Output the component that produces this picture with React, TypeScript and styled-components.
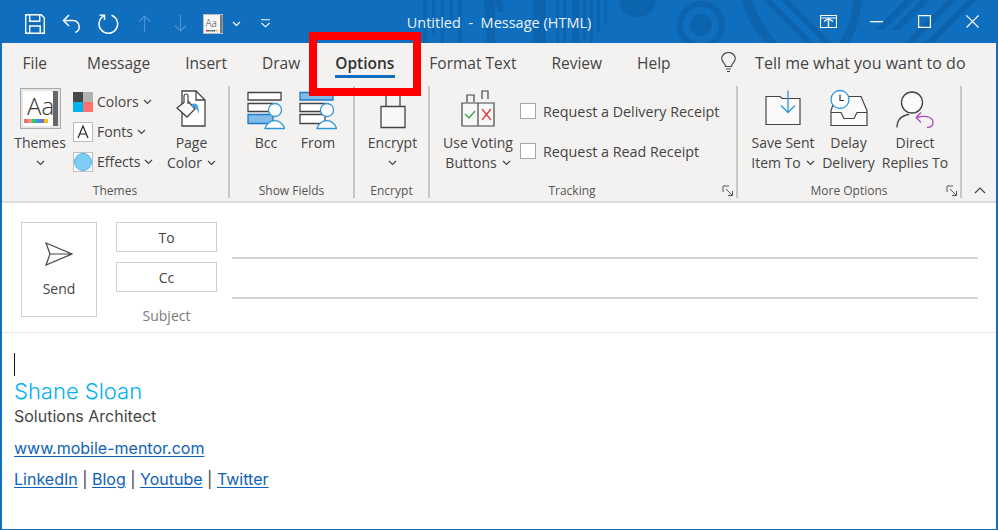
import React from "react";
import styled, { createGlobalStyle } from "styled-components";

const GlobalStyle = createGlobalStyle`
  html, body {
    margin: 0;
    padding: 0;
    background: #fff;
  }
  body {
    font-family: "Open Sans", "Noto Sans", sans-serif;
    color: #444;
  }
`;

const Window = styled.div`
  position: relative;
  width: 998px;
  height: 530px;
  box-sizing: border-box;
  border: solid #106ebe;
  border-width: 0 2px 1px;
  overflow: hidden;
  display: flex;
  flex-direction: column;
`;

/* title bar */
const TitleBar = styled.div`
  position: relative;
  height: 43px;
  margin: 0 -2px;
  flex: none;
  background: #106ebe;
  display: grid;
  grid-template-columns: 1fr auto 1fr;
  align-items: center;
  color: #fff;
`;

const Pattern = styled.svg`
  position: absolute;
  inset: 0;
`;

const QuickAccess = styled.div`
  position: relative;
  display: flex;
  align-items: center;
  padding: 4px 0 0 25px;
  box-sizing: border-box;
  height: 100%;
`;

const QatIcon = styled.svg<{ $gap?: number }>`
  flex: none;
  margin-right: ${(p) => p.$gap ?? 0}px;
`;

const TitleText = styled.div`
  position: relative;
  font-size: 14.5px;
  white-space: pre;
  color: #eaf3fb;
  margin-top: 2px;
`;

const WindowButtons = styled.div`
  position: relative;
  display: flex;
  justify-content: flex-end;
  height: 100%;
  padding-right: 2px;
`;

const WindowButton = styled.div`
  width: 48px;
  display: flex;
  align-items: center;
  justify-content: center;
`;

/* ribbon */
const Ribbon = styled.div`
  flex: none;
  height: 158px;
  background: #f3f2f1;
  border-bottom: 2px solid #dcdbd9;
  display: flex;
  flex-direction: column;
`;

const TabRow = styled.div`
  height: 41px;
  display: flex;
  align-items: center;
  padding-left: 3px;
  font-size: 15.5px;
  color: #444;
`;

const Tab = styled.div<{ $active?: boolean; $first?: boolean }>`
  position: relative;
  padding: 0 17.5px;
  margin-right: ${(p) => (p.$first ? 5 : 0)}px;
  white-space: nowrap;
  height: 100%;
  display: flex;
  align-items: center;
  padding-bottom: 2px;
  box-sizing: border-box;
  font-weight: ${(p) => (p.$active ? 600 : 400)};
  color: ${(p) => (p.$active ? "#333" : "#444")};
  &::after {
    content: "";
    display: ${(p) => (p.$active ? "block" : "none")};
    position: absolute;
    left: 17px;
    right: 17px;
    bottom: 6px;
    height: 3px;
    background: #106ebe;
  }
`;

const TellMe = styled.div`
  display: flex;
  align-items: center;
  margin-left: 33px;
  gap: 19px;
  font-size: 16px;
  padding-bottom: 2px;
  white-space: nowrap;
`;

const Groups = styled.div`
  display: flex;
  height: 114px;
  padding-top: 2px;
  box-sizing: border-box;
  position: relative;
`;

const Group = styled.div<{ $w: number }>`
  position: relative;
  width: ${(p) => p.$w}px;
  flex: none;
  box-sizing: border-box;
  border-right: 2px solid #c8c6c4;
  display: flex;
  flex-direction: column;
`;

const GroupBody = styled.div<{ $pad?: number }>`
  flex: 1;
  display: flex;
  padding-left: ${(p) => p.$pad ?? 0}px;
  min-height: 0;
`;

const GroupLabel = styled.div<{ $launcher?: boolean }>`
  height: 14px;
  font-size: 12px;
  line-height: 14px;
  text-align: center;
  color: #555;
  flex: none;
  padding-right: ${(p) => (p.$launcher ? 22 : 0)}px;
`;

const Launcher = styled.svg`
  position: absolute;
  right: 2px;
  bottom: 1px;
`;

const BigButton = styled.div<{ $w: number }>`
  width: ${(p) => p.$w}px;
  flex: none;
  display: flex;
  flex-direction: column;
  align-items: center;
  font-size: 14px;
  line-height: 20px;
  color: #444;
`;

const BigIcon = styled.svg`
  flex: none;
  height: 45px;
  margin-bottom: 2px;
`;

const Line = styled.div`
  display: flex;
  align-items: center;
  justify-content: center;
  gap: 5px;
  height: 20px;
  white-space: nowrap;
`;

const SmallColumn = styled.div`
  display: flex;
  flex-direction: column;
  gap: 9px;
  padding-top: 5px;
  margin-left: 5px;
  width: 92px;
  flex: none;
`;

const SmallItem = styled.div`
  display: flex;
  align-items: center;
  gap: 4px;
  height: 21px;
  font-size: 14px;
  white-space: nowrap;
  color: #444;
`;

const Checks = styled.div`
  display: flex;
  flex-direction: column;
  gap: 22px;
  padding-top: 16px;
  margin-left: 1px;
`;

const CheckRow = styled.div`
  display: flex;
  align-items: center;
  gap: 7px;
  height: 18px;
  font-size: 14.3px;
  white-space: nowrap;
  color: #444;
`;

const CheckBox = styled.div`
  width: 16px;
  height: 16px;
  box-sizing: border-box;
  border: 1px solid #a6a6a6;
  background: #fff;
`;

const Collapse = styled.svg`
  position: absolute;
  right: 10px;
  bottom: 4px;
`;

/* compose form */
const Compose = styled.div`
  flex: none;
  height: 130px;
  box-sizing: border-box;
  border-bottom: 1px solid #e6e6e6;
  padding: 19px 18px 0 19px;
  display: flex;
  align-items: flex-start;
`;

const SendButton = styled.div`
  width: 76px;
  height: 95px;
  box-sizing: border-box;
  border: 1px solid #cfcfcf;
  flex: none;
  display: flex;
  flex-direction: column;
  align-items: center;
  font-size: 14px;
  color: #444;
  padding-top: 19px;
  gap: 13px;
`;

const AddressButtons = styled.div`
  width: 101px;
  margin-left: 19px;
  flex: none;
  display: flex;
  flex-direction: column;
  gap: 10px;
`;

const AddressButton = styled.div`
  height: 30px;
  box-sizing: border-box;
  border: 1px solid #cfcfcf;
  display: flex;
  align-items: center;
  justify-content: center;
  font-size: 14px;
  color: #444;
`;

const SubjectLabel = styled.div`
  text-align: center;
  font-size: 14px;
  color: #7a7a7a;
  margin-top: 4px;
`;

const AddressLines = styled.div`
  flex: 1;
  margin-left: 15px;
  display: flex;
  flex-direction: column;
`;

const AddressLine = styled.div`
  height: 38px;
  border-bottom: 2px solid #d6d6d6;
  &:first-child {
    height: 35px;
  }
`;

/* message body */
const Body = styled.div`
  flex: 1;
  position: relative;
  padding: 20px 0 0 12px;
  font-family: "Inter", "Open Sans", sans-serif;
`;

const Caret = styled.div`
  width: 1px;
  height: 23px;
  background: #111;
`;

const SigName = styled.div`
  font-size: 22px;
  line-height: 30px;
  font-weight: 300;
  color: #00b0f0;
`;

const SigTitle = styled.div`
  font-size: 16px;
  line-height: 20px;
  color: #454545;
`;

const SigLinks = styled.div<{ $top: number }>`
  font-size: 16px;
  line-height: 22px;
  margin-top: ${(p) => p.$top}px;
  color: #444;
`;

const SigLink = styled.a`
  color: #0f62b8;
  text-decoration: underline;
  text-underline-offset: 2px;
`;

/* annotation drawn on the screenshot */
const Highlight = styled.div`
  position: absolute;
  left: 307px;
  top: 32px;
  width: 112px;
  height: 64px;
  box-sizing: border-box;
  border: 8px solid #fe0000;
  pointer-events: none;
`;

const Chevron = ({ up }: { up?: boolean }) => (
  <svg width="9" height="6" viewBox="0 0 9 6" fill="none" stroke="#444" strokeWidth="1.2">
    <path d={up ? "M1 5l3.5-3.5L8 5" : "M1 1l3.5 3.5L8 1"} />
  </svg>
);

const DialogLauncher = () => (
  <Launcher width="12" height="12" viewBox="0 0 12 12" fill="none" stroke="#555" strokeWidth="1">
    <path d="M1 7V1h6M4 4l6.5 6.5M10.5 6v4.5H6" />
  </Launcher>
);

const FieldsIcon = ({ row }: { row: number }) => {
  const bars = ["M1 3h33v7.500H1z", "M1 14h25v8H1z", "M1 25h25v9H1z"];
  return (
    <BigIcon width="38" height="38" viewBox="0 0 38 38" fill="none">
      {bars.map((d, i) => (
        <path
          key={d}
          d={d}
          fill={i === row ? "#80bbea" : "#fff"}
          stroke={i === row ? "#1f78c8" : "#444"}
          strokeWidth="1.3"
        />
      ))}
      <circle cx="28" cy="20.500" r="6.500" fill="#fff" stroke="#2d96d8" strokeWidth="1.3" />
      <path d="M18 39a10 10 0 0 1 19.500 0z" fill="#fff" stroke="#2d96d8" strokeWidth="1.3" />
    </BigIcon>
  );
};

const App: React.FC = () => {
  return (
    <Window>
      <GlobalStyle />
      <TitleBar>
        <Pattern width="998" height="43" viewBox="0 0 998 43">
          <g fill="#0b5ca4" opacity="0.6">
            <path d="M423 0h4v43h-4zM432 0h3v35h-3zM441 0h3v43h-3zM450 0h3v20h-3zM458 0h4v43h-4z" />
            <path d="M484 0h11v43h-8z" />
            <path d="M533 0h13v43h-13zM495 0h7l2 12h-6z" />
            <path d="M556 0h3v43h-3zM563 0h3v43h-3zM572 0h7v43h-7zM583 0h3v40h-3zM590 0h3v43h-3zM597 0h3v32h-3zM604 0h3v24h-3z" />
            <path d="M619 0h37a18.500 17 0 0 1-37 0z" />
            <path fillRule="evenodd" d="M701 1a24 24 0 1 0 .01 0zM701 7a18 18 0 1 1-.01 0zM701 14a11 11 0 1 0 .01 0z" />
            <path d="M742 0h10c6 18 14 32 26 43h-11C755 32 746 18 742 0z" />
            <path d="M763 0h8l43 43h-8zM781 0h8l43 43h-8z" />
            <path d="M853 0h9c-2 18-6 32-13 43h-10c8-12 13-26 14-43z" />
            <path d="M905 0h9l-30 30h-9zM921 0h9l-30 30h-9zM948 0h9l-43 43h-9zM968 0h9l-43 43h-9z" />
          </g>
        </Pattern>
        <QuickAccess>
          <QatIcon $gap={17} width="20" height="20" viewBox="0 0 20 20" fill="none" stroke="#fff" strokeWidth="1.4">
            <path d="M.7.7h15.500l3.100 3.100v15.500H.7zM4.700.7v6.600h10V.7M4.700 19.300v-7.300h10.500v7.300" />
          </QatIcon>
          <QatIcon $gap={17} width="19" height="20" viewBox="0 0 19 20" fill="none" stroke="#fff" strokeWidth="1.5">
            <path d="M7 1L1.500 6.500 7 12M2 6.500h9a6.300 6.300 0 0 1 2.500 12" />
          </QatIcon>
          <QatIcon $gap={19} width="21" height="21" viewBox="0 0 21 21" fill="none" stroke="#fff" strokeWidth="1.5">
            <path d="M13.500 2.200a9.300 9.300 0 1 1-7.300.4M6.500 7V2.300H1.700" />
          </QatIcon>
          <QatIcon $gap={23} width="13" height="17" viewBox="0 0 13 17" fill="none" stroke="#4a93d4" strokeWidth="1.2">
            <path d="M6.500 17V1M1 6.500l5.500-5.500 5.500 5.500" />
          </QatIcon>
          <QatIcon $gap={16} width="13" height="17" viewBox="0 0 13 17" fill="none" stroke="#4a93d4" strokeWidth="1.2">
            <path d="M6.500 0v16M1 10.500l5.500 5.500 5.500-5.500" />
          </QatIcon>
          <QatIcon $gap={9} width="20" height="20" viewBox="0 0 20 20">
            <rect x=".5" y=".5" width="19" height="19" fill="#f6f6f6" stroke="#bbb" />
            <path d="M17 1h2.500v18H17z" fill="#777" />
            <text x="2.500" y="13" fontSize="10" fontWeight="300" fontFamily="Open Sans" fill="#333">Aa</text>
            <path d="M3 16h3v1.500H3z" fill="#e25" />
            <path d="M6 16h3v1.500H6z" fill="#3a5" />
            <path d="M9 16h3v1.500H9z" fill="#36c" />
            <path d="M12 16h3v1.500h-3z" fill="#fb2" />
          </QatIcon>
          <QatIcon $gap={19} width="9" height="6" viewBox="0 0 9 6" fill="none" stroke="#fff" strokeWidth="1.2">
            <path d="M1 1l3.500 3.500L8 1" />
          </QatIcon>
          <QatIcon width="11" height="9" viewBox="0 0 11 9" fill="none" stroke="#fff" strokeWidth="1.1">
            <path d="M1 .7h9M1.500 4l4 3.800 4-3.800" />
          </QatIcon>
        </QuickAccess>
        <TitleText>{"Untitled  -  Message (HTML)"}</TitleText>
        <WindowButtons>
          <WindowButton>
            <svg width="17" height="13" viewBox="0 0 17 13" fill="none" stroke="#fff" strokeWidth="1.1">
              <path d="M.5.500h16v12H.5zM.5 3h16" />
              <path d="M4 6.500L8.500 3.500l4.500 3M8.500 4v8.500" strokeWidth="1.4" />
            </svg>
          </WindowButton>
          <WindowButton>
            <svg width="13" height="2" viewBox="0 0 13 2">
              <path d="M0 0h13v1.300H0z" fill="#fff" />
            </svg>
          </WindowButton>
          <WindowButton>
            <svg width="13" height="13" viewBox="0 0 13 13" fill="none" stroke="#fff" strokeWidth="1.2">
              <path d="M.6.600h11.800v11.800H.6z" />
            </svg>
          </WindowButton>
          <WindowButton>
            <svg width="13" height="13" viewBox="0 0 13 13" fill="none" stroke="#fff" strokeWidth="1.1">
              <path d="M.5.500l12 12M12.500.500l-12 12" />
            </svg>
          </WindowButton>
        </WindowButtons>
      </TitleBar>

      <Ribbon>
        <TabRow>
          <Tab $first>File</Tab>
          <Tab>Message</Tab>
          <Tab>Insert</Tab>
          <Tab>Draw</Tab>
          <Tab $active>Options</Tab>
          <Tab>Format Text</Tab>
          <Tab>Review</Tab>
          <Tab>Help</Tab>
          <TellMe>
            <svg width="15" height="21" viewBox="0 0 15 21" fill="none" stroke="#444" strokeWidth="1.1">
              <path d="M4.500 14.500c0-3-3.800-4.500-3.800-8a6.800 6 0 0 1 13.600 0c0 3.500-3.800 5-3.800 8zM5 17h5M6 19.500h3" />
            </svg>
            Tell me what you want to do
          </TellMe>
        </TabRow>
        <Groups>
          <Group $w={228}>
            <GroupBody $pad={10}>
              <BigButton $w={56}>
                <BigIcon width="41" height="41" viewBox="0 0 41 41">
                  <rect x=".5" y=".5" width="40" height="40" fill="#e6e6e6" stroke="#aaa" />
                  <path d="M3 3h28l4 4v31H3z" fill="#fff" />
                  <path d="M33 3h5v35h-5z" fill="#666" />
                  <text x="7" y="27" fontSize="24" fontWeight="300" fontFamily="Open Sans" fill="#333">Aa</text>
                  <path d="M4 31h4v4H4z" fill="#ec7063" />
                  <path d="M8 31h4v4H8z" fill="#f1948a" />
                  <path d="M12 31h4v4h-4z" fill="#2ecc71" />
                  <path d="M16 31h4v4h-4z" fill="#3498db" />
                  <path d="M20 31h4v4h-4z" fill="#7d6bbd" />
                  <path d="M24 31h4v4h-4z" fill="#f1c40f" />
                </BigIcon>
                <Line>Themes</Line>
                <Line><Chevron /></Line>
              </BigButton>
              <SmallColumn>
                <SmallItem>
                  <svg width="20" height="20" viewBox="0 0 20 20">
                    <path d="M0 0h10v10H0z" fill="#484848" />
                    <path d="M10 0h10v10H10z" fill="#b3b3b3" />
                    <path d="M0 10h10v10H0z" fill="#00b4f0" />
                    <path d="M10 10h10v10H10z" fill="#ff7070" />
                  </svg>
                  Colors <Chevron />
                </SmallItem>
                <SmallItem>
                  <svg width="20" height="20" viewBox="0 0 20 20">
                    <rect x=".5" y=".5" width="19" height="19" fill="#fff" stroke="#b8b8c8" />
                    <path d="M5 16L10 4l5 12M7 12h6" fill="none" stroke="#222" strokeWidth="1.2" />
                  </svg>
                  Fonts <Chevron />
                </SmallItem>
                <SmallItem>
                  <svg width="20" height="20" viewBox="0 0 20 20">
                    <rect x=".5" y=".5" width="19" height="19" fill="#fff" stroke="#c0c0c0" />
                    <circle cx="10" cy="10" r="8.500" fill="#7fcdf7" stroke="#4fb4ec" />
                  </svg>
                  Effects <Chevron />
                </SmallItem>
              </SmallColumn>
              <BigButton $w={53}>
                <BigIcon width="32" height="37" viewBox="0 0 32 37" fill="none">
                  <path d="M6 1h14l9 9v26H6z" fill="#fff" stroke="#444" strokeWidth="1.3" />
                  <path d="M20 1v9h9" stroke="#444" strokeWidth="1.3" />
                  <path d="M1 18l10-8 8 9-8 8z" fill="#f8f8f8" stroke="#444" strokeWidth="1.3" />
                  <path d="M8 12V6a2 2 0 0 1 4 0v8" stroke="#444" strokeWidth="1.2" fill="#fff" />
                  <path d="M16 14c5-2 7 2 7 10-2-5-3-7-7-7z" fill="#3f9fe0" />
                </BigIcon>
                <Line>Page</Line>
                <Line>Color <Chevron /></Line>
              </BigButton>
            </GroupBody>
            <GroupLabel>Themes</GroupLabel>
          </Group>

          <Group $w={125}>
            <GroupBody $pad={10}>
              <BigButton $w={52}>
                <FieldsIcon row={2} />
                <Line>Bcc</Line>
              </BigButton>
              <BigButton $w={52}>
                <FieldsIcon row={0} />
                <Line>From</Line>
              </BigButton>
            </GroupBody>
            <GroupLabel>Show Fields</GroupLabel>
          </Group>

          <Group $w={75}>
            <GroupBody $pad={1}>
              <BigButton $w={73}>
                <BigIcon width="26" height="42" viewBox="0 0 26 42" fill="none" stroke="#444" strokeWidth="1.3">
                  <path d="M6 19V6h14v13" />
                  <path d="M1 19h24v21H1z" fill="#f8f8f8" />
                </BigIcon>
                <Line>Encrypt</Line>
                <Line><Chevron /></Line>
              </BigButton>
            </GroupBody>
            <GroupLabel>Encrypt</GroupLabel>
          </Group>

          <Group $w={308}>
            <GroupBody $pad={7}>
              <BigButton $w={82}>
                <BigIcon width="34" height="37" viewBox="0 0 34 37" fill="none" stroke="#444" strokeWidth="1.2">
                  <path d="M6 12V5h7v7M21 9V1h6v8" />
                  <path d="M1 13h16v23H1zM17 13h16v23H17z" fill="#f8f8f8" />
                  <path d="M4 24l4 4 6-7" stroke="#3fa648" strokeWidth="1.4" />
                  <path d="M21 19l9 11M30 19l-9 11" stroke="#e0403a" strokeWidth="1.4" />
                </BigIcon>
                <Line>Use Voting</Line>
                <Line>Buttons <Chevron /></Line>
              </BigButton>
              <Checks>
                <CheckRow><CheckBox />Request a Delivery Receipt</CheckRow>
                <CheckRow><CheckBox />Request a Read Receipt</CheckRow>
              </Checks>
            </GroupBody>
            <GroupLabel $launcher>Tracking</GroupLabel>
            <DialogLauncher />
          </Group>

          <Group $w={224}>
            <GroupBody $pad={7}>
              <BigButton $w={76}>
                <BigIcon width="36" height="36" viewBox="0 0 36 36" fill="none">
                  <path d="M1 6h14l2 2h18v26H1z" fill="#fafafa" stroke="#444" strokeWidth="1.2" />
                  <path d="M23 0v22M16 15l7 7 7-7" stroke="#2d96d8" strokeWidth="1.3" />
                </BigIcon>
                <Line>Save Sent</Line>
                <Line>Item To <Chevron /></Line>
              </BigButton>
              <BigButton $w={55}>
                <BigIcon width="38" height="38" viewBox="0 0 38 38" fill="none">
                  <path d="M6 7h25l6 14v15H1V21z" fill="#fafafa" stroke="#444" strokeWidth="1.2" />
                  <path d="M1 23h10l3 6h10l3-6h10" stroke="#444" strokeWidth="1.2" />
                  <circle cx="10" cy="10" r="9" fill="#fff" stroke="#2d96d8" strokeWidth="1.3" />
                  <path d="M10 5v6h4" stroke="#333" strokeWidth="1.2" />
                </BigIcon>
                <Line>Delay</Line>
                <Line>Delivery</Line>
              </BigButton>
              <BigButton $w={78}>
                <BigIcon width="38" height="38" viewBox="0 0 38 38" fill="none">
                  <circle cx="16" cy="13" r="10.500" fill="#fafafa" stroke="#444" strokeWidth="1.3" />
                  <path d="M1 38c0-8 5-12 12-13" stroke="#444" strokeWidth="1.3" />
                  <path d="M20 28c11-3 17 0 17 5s-4 5-6 5M20 28l5-5M20 28l5 5" stroke="#a94bc2" strokeWidth="1.3" />
                </BigIcon>
                <Line>Direct</Line>
                <Line>Replies To</Line>
              </BigButton>
            </GroupBody>
            <GroupLabel>More Options</GroupLabel>
            <DialogLauncher />
          </Group>
          <Collapse width="12" height="8" viewBox="0 0 12 8" fill="none" stroke="#444" strokeWidth="1.2">
            <path d="M1 7l5-5 5 5" />
          </Collapse>
        </Groups>
      </Ribbon>

      <Compose>
        <SendButton>
          <svg width="28" height="24" viewBox="0 0 28 24" fill="none" stroke="#444" strokeWidth="1.2">
            <path d="M1 1l26 11L1 23l4-11zM5 12h22" />
          </svg>
          Send
        </SendButton>
        <AddressButtons>
          <AddressButton>To</AddressButton>
          <AddressButton>Cc</AddressButton>
          <SubjectLabel>Subject</SubjectLabel>
        </AddressButtons>
        <AddressLines>
          <AddressLine />
          <AddressLine />
        </AddressLines>
      </Compose>

      <Body>
        <Caret />
        <SigName>Shane Sloan</SigName>
        <SigTitle>Solutions Architect</SigTitle>
        <SigLinks $top={11}><SigLink>www.mobile-mentor.com</SigLink></SigLinks>
        <SigLinks $top={9}>
          <SigLink>LinkedIn</SigLink> | <SigLink>Blog</SigLink> | <SigLink>Youtube</SigLink> | <SigLink>Twitter</SigLink>
        </SigLinks>
      </Body>

      <Highlight />
    </Window>
  );
};

export default App;
